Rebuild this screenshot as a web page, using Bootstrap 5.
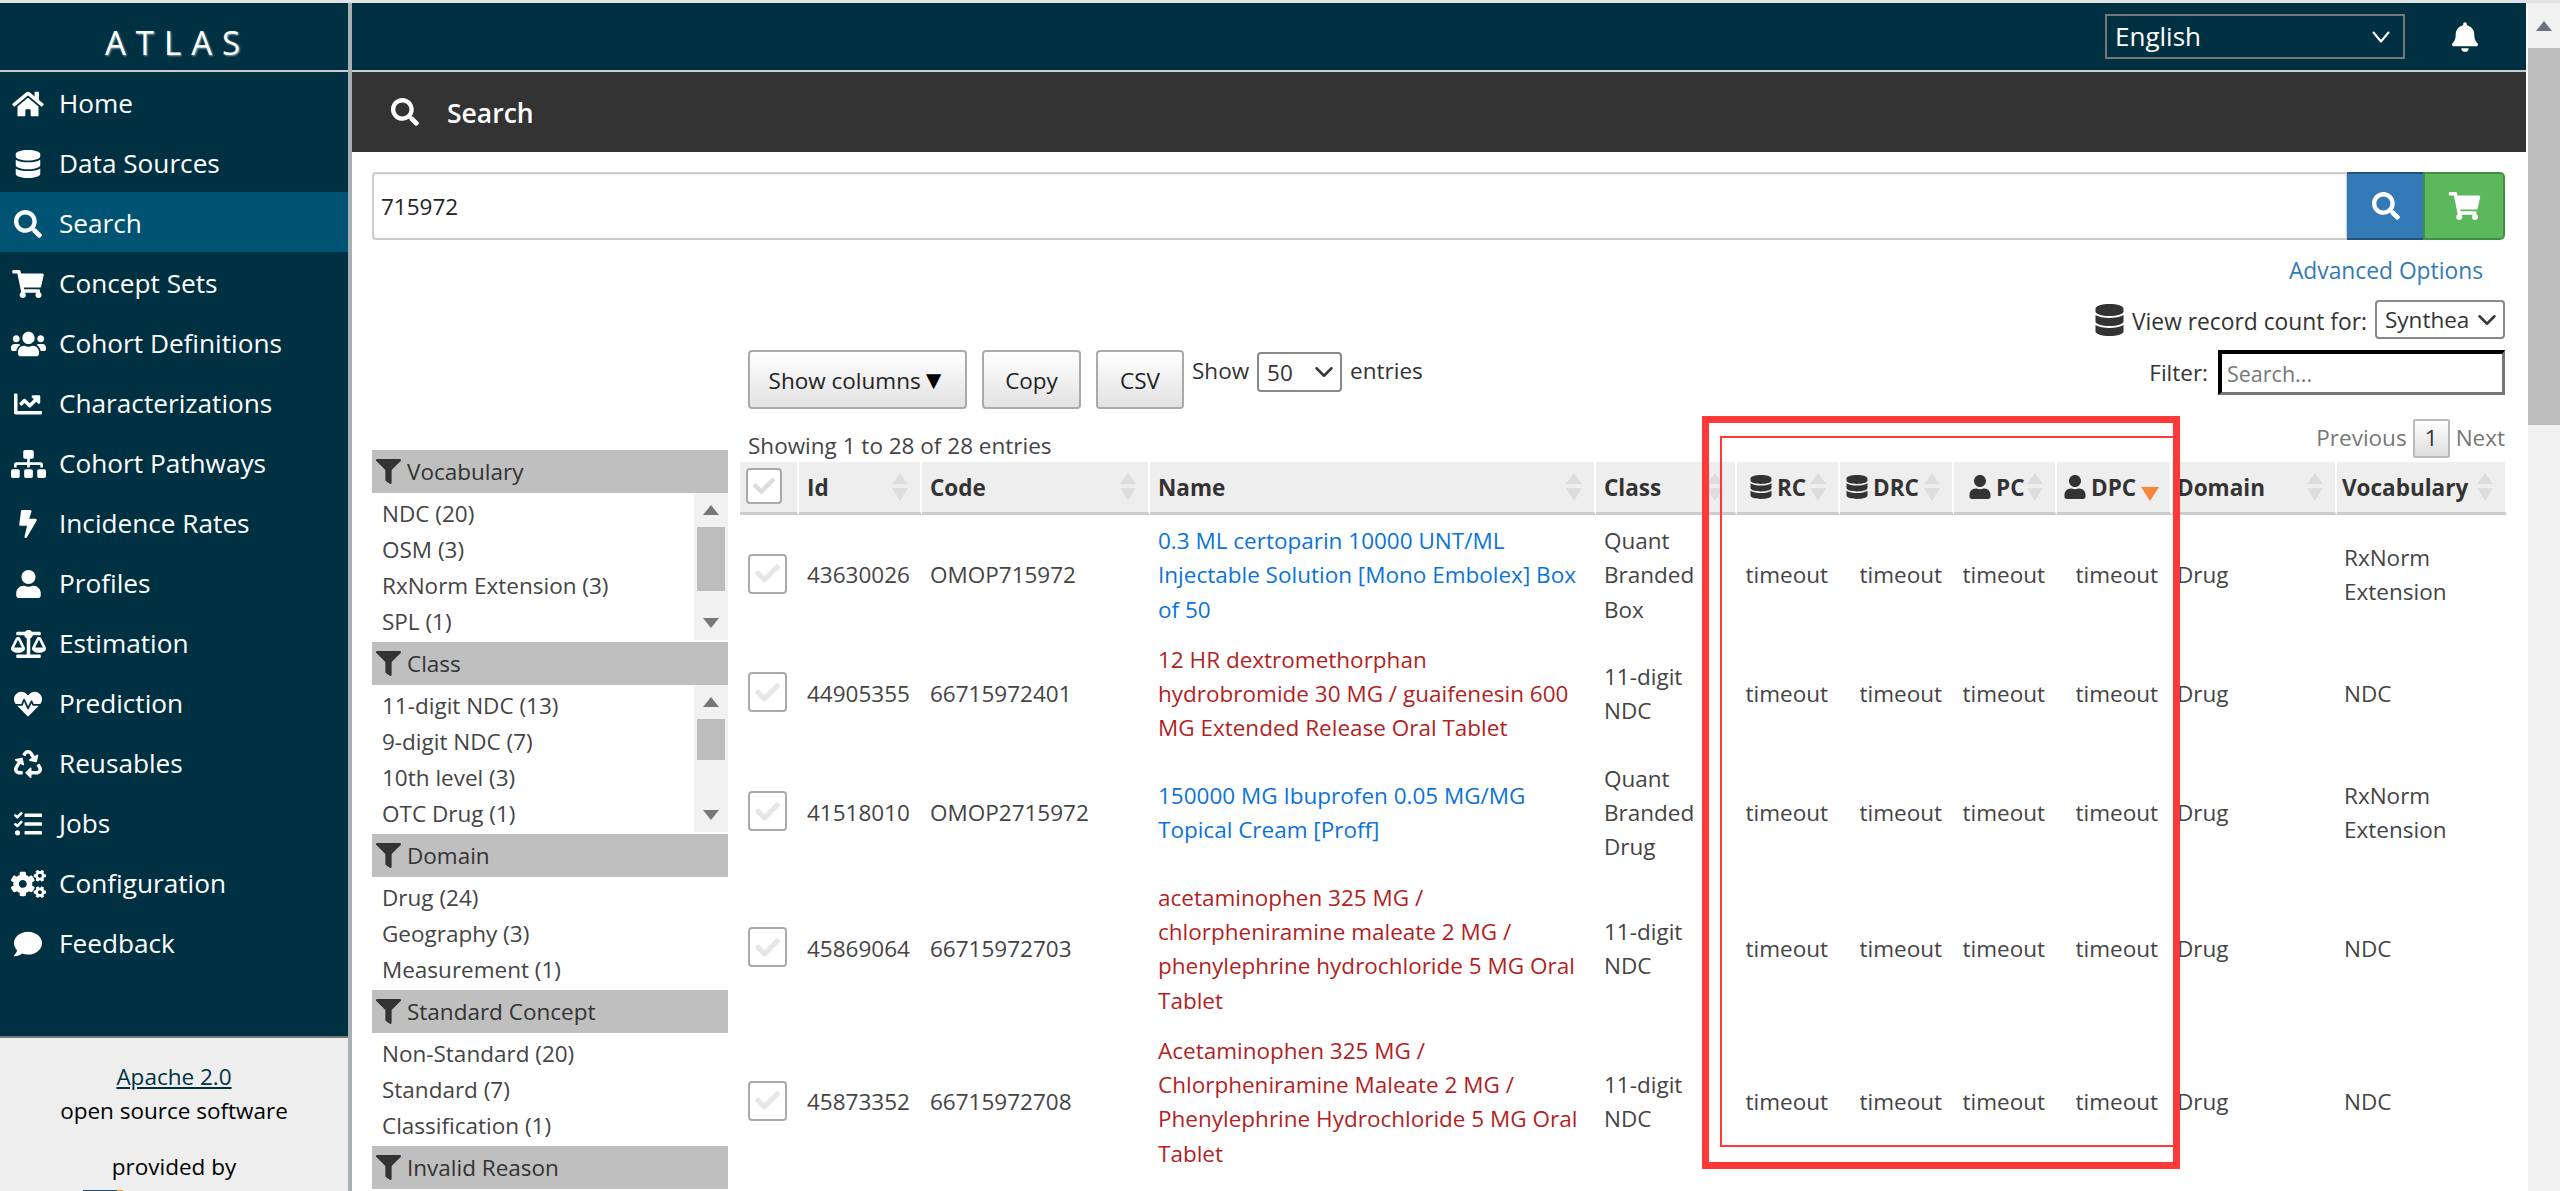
<!doctype html>
<html lang="en"><head><meta charset="utf-8"><title>ATLAS</title>
<link href="https://cdn.jsdelivr.net/npm/bootstrap@5.3.0/dist/css/bootstrap.min.css" rel="stylesheet">
<style>
html,body{height:100%;overflow:hidden;background:#fff}
body{font-family:"Open Sans","Noto Sans",sans-serif;font-size:22.5px;line-height:34.3px;color:#333}
.ic{fill:currentColor;display:inline-block;flex:none}
.shell{height:1191px;padding-top:3px;background:#dfe3e6;position:relative;overflow:hidden}
.shell-in{height:1188px;background:#fff}
.sidebar{width:352px;flex:none;background:#003142;border-right:4px solid #a9b0b3;height:100%}
.brand{height:69px;flex:none;border-bottom:2px solid #ccc;color:#fff;font-size:33px;letter-spacing:10px;padding:13px 0 0 7px;text-shadow:1px 1px 2px #8aa}
.menu a{height:60px;flex:none;color:#fff;text-decoration:none;font-size:26.2px;padding:3px 0 0 12px}
.menu a.on{background:#005373}
.menu .icw{width:32px;margin-right:15px;text-align:center;display:flex;justify-content:center}
.side-foot{background:#eee;border-top:2px solid #777;color:#000;height:155px;padding-top:22px;overflow:hidden;flex:none}
.side-foot a{color:#003142}
.side-foot p{margin:0;line-height:34.3px}
.side-foot .prov{margin-top:21px}
.logo-peek{width:40px;height:3px;background:linear-gradient(90deg,#2b4a63 85%,#f39a3c 85%);margin:6px auto 0 83px}
.menu{min-height:0;overflow:hidden}
.mainc{width:2174px;flex:none;height:100%}
.topb{height:67px;background:#003142;padding-right:48px;box-sizing:content-box}
.hr-l{height:2px;background:#ccc}
.lang{width:300px;height:45px;border:2px solid #777;border-radius:0;background-color:transparent;color:#fff;font-size:26px;padding:0 8px;line-height:41px;margin-right:47px;background-position:right 10px center;background-size:24px 24px;
background-image:url("data:image/svg+xml,%3csvg xmlns='http://www.w3.org/2000/svg' viewBox='0 0 16 16'%3e%3cpath fill='none' stroke='%23fff' stroke-linecap='round' stroke-linejoin='round' stroke-width='1.4' d='m3 5 5 6 5-6'/%3e%3c/svg%3e")}
.titleb{height:80px;background:#333;color:#fff;font-size:26.5px;font-weight:600;padding-left:39px}
.titleb .ic{margin-right:28px}
.titleb span{padding-top:2px}
.srch{margin:20px 21px 0 20px;width:auto}
.srch .form-control{height:68px;border:2px solid #ccc;border-radius:4px 0 0 4px;font-size:22.5px;color:#222;padding:0 6px 0 7px;box-shadow:inset 0 1px 2px rgba(0,0,0,.08)}
.bt-blue,.bt-green{height:68px;display:flex;align-items:center;justify-content:center;border-radius:0;color:#fff;padding:0}
.bt-blue{width:77px;background:#337ab7;border:2px solid #23527c;border-width:2px 0 2px 0}
.bt-green{width:82px;background:#5cb85c;border:2px solid #3d9140;border-radius:0 5px 5px 0}
.bt-blue:hover{background:#337ab7}.bt-green:hover{background:#5cb85c}
.advr{margin:14px 43px 0 0;text-align:right;font-size:22.8px;height:35px}
.advr a{color:#337ab7;text-decoration:none}
.recr{margin:11px 21px 0 0;height:39px}
.recr span{font-size:22.8px;padding-top:5px}
.sel-sm{height:39px;border:2px solid #888;border-radius:4px;font-size:22.5px;line-height:35px;color:#333;padding:0 0 0 8px;background-position:right 6px center;background-size:20px 20px}
.sel-src{width:130px;margin-left:8px}
.sel-cnt{width:85px;margin:0 8px;height:40px}
.wrk{margin:11px 19px 0 20px;gap:12px}
.facets{width:356px;flex:none;padding-top:100px}
.fhead{height:43px;background:#bfbfbf;color:#333;padding:0 0 0 4px;gap:6px}
.fhead span{padding-top:2px}
.flist{margin-bottom:2px}
.flist ul{list-style:none;margin:0;padding:3px 0 0 10px;flex:1 1 auto}
.flist li{height:36px;line-height:36px;color:#444;white-space:nowrap}
.fscroll{width:34px;flex:none;background:#f1f1f1;height:147px}
.farw{height:34px;display:flex;align-items:center;justify-content:center;color:#777;font-size:0}
.ftrack{height:79px;padding:0 3px}
.fthumb{background:#bdbdbd;width:100%}
.th1{height:64px}.th2{height:41px}
.tblw{width:1767px;flex:none}
.toolb{height:65px}
.bt-g{height:59px;border:2px solid #aaa;border-radius:4px;background:linear-gradient(#fff,#e2e2e2);color:#222;font-size:22.5px;padding:2px 0 0;margin:0 15px 0 0}
.bt-g1{width:219px;margin-left:8px;white-space:nowrap}.bt-g2{width:99px}.bt-g3{width:88px;margin-right:8px}
.bt-g1 span{font-size:26px;line-height:1}
.mid-t{margin-top:-2px}
.mid-t span{padding-top:2px}
.filt{margin-right:2px}
.filt>span{padding-top:2px}
.filt input{width:287px;height:45px;margin-left:10px;border-style:inset;border-width:4px 3px 3px 4px;border-color:#222 #777 #777 #222;border-radius:0;padding:0 5px;font-size:21.5px;outline:0}
.filt input::placeholder{color:#777}
.infob{height:47px;padding-left:8px;padding-right:2px}
.infob .shw{align-self:flex-end;color:#444;margin-bottom:-1px}
.pgr{color:#777;gap:6px}
.pgn{width:37px;height:39px;border:2px solid #bbb;border-radius:2px;background:linear-gradient(#fff,#ddd);display:flex;align-items:center;justify-content:center;color:#333}
.dtbl{table-layout:fixed;width:1767px;border-collapse:separate;border-spacing:0;color:#333;margin:0;font-size:22.5px;line-height:34.3px}
.dtbl th{background:#eee;height:53px;padding:3px 0 0 8px;border-right:2px solid #fff;border-bottom:3px solid #ccc;font-weight:700;color:#333;white-space:nowrap;position:relative;vertical-align:middle}
.dtbl td{padding:9px 2px 7px 8px;vertical-align:middle;white-space:nowrap;color:#444;background:transparent;border:0}
.dtbl td.num{text-align:right;padding:9px 12px 7px 0}
.dtbl td.num.last{padding-right:14px}
.dtbl th.pl5,.dtbl td.pl5{padding-left:5px}
.dtbl th.pl7,.dtbl td.pl7{padding-left:7px}
.c-blue{color:#0b73d9!important}.c-red{color:#b21f24!important}
.srt::before,.srt::after{content:"";position:absolute;right:12px;border-left:8px solid transparent;border-right:8px solid transparent}
.srt::before{top:11px;border-bottom:11px solid #ddd}
.srt::after{top:26px;border-top:13px solid #ddd}
.srt.dn::before{display:none}
.srt.dn::after{border-top-color:#f8853a;top:25px;right:11px;border-left-width:9px;border-right-width:9px;border-top-width:14px}
.dtbl th.n{padding:0 0 0 6px}
.ick{display:inline-flex;align-items:center;justify-content:center;border:2px solid #aaa;border-radius:4px;background:#fff;color:#e6e6e6}
.ick-h{width:36px;height:36px;color:#ddd}
.ick-r{width:39px;height:40px;position:relative;top:-1px}
.hd1{padding-left:13px!important}.hd2{padding-left:6px!important}.hd3{padding-left:15px!important}.hd4{padding-left:7px!important}
.hd1 .ic,.hd2 .ic,.hd3 .ic,.hd4 .ic{vertical-align:-3px;margin-right:5px;color:#333}
.scrl{width:32px;flex:none;margin-left:2px;background:#f1f1f1;height:100%}
.scrl .up{height:45px;display:flex;align-items:center;justify-content:center}
.scrl .thm{height:377px;background:#bdbdbd}
.redo{position:absolute;left:1702px;top:416px;width:478px;height:753px;border:7px solid #ff3838;pointer-events:none}
.redi{position:absolute;left:1720px;top:436px;width:453px;height:711px;border:2px solid #ff3838;border-right:0;pointer-events:none}
</style></head>
<body>
<svg width="0" height="0" class="position-absolute"><defs>
<symbol id="i-home" viewBox="0 0 576 512"><path d="M280.37 148.26L96 300.11V464a16 16 0 0 0 16 16l112.06-.29a16 16 0 0 0 15.92-16V368a16 16 0 0 1 16-16h64a16 16 0 0 1 16 16v95.64a16 16 0 0 0 16 16.05L464 480a16 16 0 0 0 16-16V300L295.67 148.26a12.19 12.19 0 0 0-15.3 0zM571.6 251.47L488 182.56V44.05a12 12 0 0 0-12-12h-56a12 12 0 0 0-12 12v72.61L318.47 43a48 48 0 0 0-61 0L4.34 251.47a12 12 0 0 0-1.6 16.9l25.5 31A12 12 0 0 0 45.15 301l235.22-193.74a12.19 12.19 0 0 1 15.3 0L530.9 301a12 12 0 0 0 16.9-1.6l25.5-31a12 12 0 0 0-1.7-16.93z"/></symbol>
<symbol id="i-db" viewBox="0 0 448 512"><path d="M448 73.143v45.714C448 159.143 347.667 192 224 192S0 159.143 0 118.857V73.143C0 32.857 100.333 0 224 0s224 32.857 224 73.143zM448 176v102.857C448 319.143 347.667 352 224 352S0 319.143 0 278.857V176c48.125 33.143 136.208 48.572 224 48.572S399.874 209.143 448 176zm0 160v102.857C448 479.143 347.667 512 224 512S0 479.143 0 438.857V336c48.125 33.143 136.208 48.572 224 48.572S399.874 369.143 448 336z"/></symbol>
<symbol id="i-search" viewBox="0 0 512 512"><path d="M505 442.7L405.3 343c-4.5-4.5-10.6-7-17-7H372c27.6-35.3 44-79.7 44-128C416 93.1 322.9 0 208 0S0 93.1 0 208s93.1 208 208 208c48.3 0 92.7-16.4 128-44v16.3c0 6.4 2.5 12.5 7 17l99.7 99.7c9.4 9.4 24.6 9.4 33.9 0l28.3-28.3c9.4-9.4 9.4-24.6.1-34zM208 336c-70.7 0-128-57.2-128-128 0-70.7 57.2-128 128-128 70.7 0 128 57.2 128 128 0 70.7-57.2 128-128 128z"/></symbol>
<symbol id="i-cart" viewBox="0 0 576 512"><path d="M528.12 301.319l47.273-208C578.806 78.301 567.391 64 551.99 64H159.208l-9.166-44.81C147.758 8.021 137.93 0 126.529 0H24C10.745 0 0 10.745 0 24v16c0 13.255 10.745 24 24 24h69.883l70.248 343.435C147.325 417.1 136 435.222 136 456c0 30.928 25.072 56 56 56s56-25.072 56-56c0-15.674-6.447-29.835-16.824-40h209.647C430.447 426.165 424 440.326 424 456c0 30.928 25.072 56 56 56s56-25.072 56-56c0-22.172-12.888-41.332-31.579-50.405l5.517-24.276c3.413-15.018-8.002-29.319-23.403-29.319H218.117l-6.545-32h293.145c11.206 0 20.92-7.754 23.403-18.681z"/></symbol>
<symbol id="i-users" viewBox="0 0 640 512"><path d="M96 224c35.3 0 64-28.7 64-64s-28.7-64-64-64-64 28.7-64 64 28.7 64 64 64zm448 0c35.3 0 64-28.7 64-64s-28.7-64-64-64-64 28.7-64 64 28.7 64 64 64zm32 32h-64c-17.6 0-33.5 7.1-45.1 18.6 40.3 22.1 68.9 62 75.1 109.4h66c17.7 0 32-14.3 32-32v-32c0-35.3-28.7-64-64-64zm-256 0c61.9 0 112-50.1 112-112S381.9 32 320 32 208 82.1 208 144s50.1 112 112 112zm76.8 32h-8.3c-20.8 10-43.9 16-68.5 16s-47.6-6-68.5-16h-8.3C179.6 288 128 339.6 128 403.2V432c0 26.5 21.5 48 48 48h288c26.5 0 48-21.5 48-48v-28.8c0-63.6-51.6-115.2-115.2-115.2zm-223.7-13.4C161.5 263.1 145.6 256 128 256H64c-35.3 0-64 28.7-64 64v32c0 17.7 14.3 32 32 32h65.9c6.3-47.4 34.9-87.3 75.2-109.4z"/></symbol>
<symbol id="i-chart" viewBox="0 0 512 512"><path d="M496 384H64V80c0-8.84-7.16-16-16-16H16C7.16 64 0 71.16 0 80v336c0 17.67 14.33 32 32 32h464c8.84 0 16-7.16 16-16v-32c0-8.84-7.16-16-16-16zM464 96H345.94c-21.38 0-32.09 25.85-16.97 40.97l32.4 32.4L288 242.75l-73.37-73.37c-12.5-12.5-32.76-12.5-45.25 0l-68.69 68.69c-6.25 6.25-6.25 16.38 0 22.63l22.62 22.62c6.25 6.25 16.38 6.25 22.63 0L192 237.25l73.37 73.37c12.5 12.5 32.76 12.5 45.25 0l96-96 32.4 32.4c15.12 15.12 40.97 4.41 40.97-16.97V112c.01-8.84-7.15-16-15.99-16z"/></symbol>
<symbol id="i-site" viewBox="0 0 640 512"><path d="M128 352H32c-17.67 0-32 14.33-32 32v96c0 17.67 14.33 32 32 32h96c17.67 0 32-14.33 32-32v-96c0-17.67-14.33-32-32-32zm-24-80h192v48h48v-48h192v48h48v-57.59c0-21.17-17.23-38.41-38.41-38.41H344v-64h40c17.67 0 32-14.33 32-32V32c0-17.67-14.33-32-32-32H256c-17.67 0-32 14.33-32 32v96c0 17.67 14.33 32 32 32h40v64H94.41C73.23 224 56 241.23 56 262.41V320h48v-48zm264 80h-96c-17.67 0-32 14.33-32 32v96c0 17.67 14.33 32 32 32h96c17.67 0 32-14.33 32-32v-96c0-17.67-14.33-32-32-32zm240 0h-96c-17.67 0-32 14.33-32 32v96c0 17.67 14.33 32 32 32h96c17.67 0 32-14.33 32-32v-96c0-17.67-14.33-32-32-32z"/></symbol>
<symbol id="i-bolt" viewBox="0 0 320 512"><path d="M296 160H180.6l42.6-129.8C227.2 15 215.7 0 200 0H56C44 0 33.8 8.9 32.2 20.8l-32 240C-1.7 275.2 9.5 288 24 288h118.7L96.6 482.5c-3.6 15.2 8 29.5 23.3 29.5 8.4 0 16.4-4.4 20.8-12l176-304c9.3-15.9-2.2-36-20.7-36z"/></symbol>
<symbol id="i-user" viewBox="0 0 448 512"><path d="M224 256c70.7 0 128-57.3 128-128S294.7 0 224 0 96 57.3 96 128s57.3 128 128 128zm89.6 32h-16.7c-22.2 10.2-46.9 16-72.9 16s-50.6-5.8-72.9-16h-16.7C60.2 288 0 348.2 0 422.4V464c0 26.5 21.5 48 48 48h352c26.5 0 48-21.5 48-48v-41.6c0-74.2-60.2-134.4-134.4-134.4z"/></symbol>
<symbol id="i-scale" viewBox="0 0 640 512"><path d="M256 336h-.02c0-16.18 1.34-8.73-85.05-181.51-17.65-35.29-68.19-35.36-85.87 0C-2.06 328.75.02 320.33.02 336H0c0 44.18 57.31 80 128 80s128-35.82 128-80zM128 176l72 144H56l72-144zm511.98 160c0-16.18 1.34-8.73-85.05-181.51-17.65-35.29-68.19-35.36-85.87 0-87.12 174.26-85.04 165.84-85.04 181.51H384c0 44.18 57.31 80 128 80s128-35.82 128-80h-.02zM440 320l72-144 72 144H440zm88 128H352V153.25c23.51-10.29 41.16-31.48 46.39-57.25H528c8.84 0 16-7.16 16-16V48c0-8.84-7.16-16-16-16H383.64C369.04 12.68 346.09 0 320 0s-49.04 12.68-63.64 32H112c-8.84 0-16 7.16-16 16v32c0 8.84 7.16 16 16 16h129.61c5.23 25.76 22.87 46.96 46.39 57.25V448H112c-8.84 0-16 7.16-16 16v32c0 8.84 7.16 16 16 16h416c8.84 0 16-7.16 16-16v-32c0-8.84-7.16-16-16-16z"/></symbol>
<symbol id="i-heart" viewBox="0 0 512 512"><path d="M320.2 243.8l-49.7 99.4c-6 12.1-23.4 11.7-28.9-.6l-56.9-126.3-30 71.7H60.6l182.5 186.5c7.1 7.3 18.6 7.3 25.7 0L451.4 288H342.3l-22.1-44.2zM473.7 73.9l-2.4-2.5c-51.5-52.6-135.8-52.6-187.4 0L256 100l-27.9-28.5c-51.5-52.7-135.9-52.7-187.4 0l-2.4 2.4C-10.4 123.7-12.5 203 31 256h102.4l35.9-86.2c5.4-12.9 23.6-13.2 29.4-.4l58.2 129.3 49-97.9c5.9-11.8 22.7-11.8 28.6 0l27.6 55.2H481c43.5-53 41.4-132.3-7.3-182.1z"/></symbol>
<symbol id="i-recycle" viewBox="0 0 512 512"><path d="M184.561 261.903c3.232 13.997-12.123 24.635-24.068 17.168l-40.736-25.455-50.867 81.402C55.606 356.273 70.96 384 96.012 384H148c6.627 0 12 5.373 12 12v40c0 6.627-5.373 12-12 12H96.115c-75.334 0-121.302-83.048-81.408-146.88l50.822-81.388-40.725-25.448c-12.081-7.547-8.966-25.961 4.879-29.158l110.237-25.45c8.611-1.988 17.201 3.381 19.189 11.99l25.452 110.237zm98.561-182.915l41.289 66.076-40.74 25.457c-12.051 7.528-9 25.953 4.879 29.158l110.237 25.45c8.672 1.999 17.215-3.438 19.189-11.99l25.45-110.237c3.197-13.844-11.99-24.719-24.068-17.168l-40.687 25.424-41.263-66.082c-37.521-60.033-125.209-60.171-162.816 0l-17.963 28.766c-3.51 5.62-1.8 13.021 3.82 16.533l33.919 21.195c5.62 3.512 13.024 1.803 16.536-3.817l17.961-28.743c12.712-20.341 42.272-20.459 55.057-.022zM497.288 301.12l-27.541-44.101c-3.511-5.618-10.915-7.33-16.535-3.818l-33.861 21.159c-5.62 3.512-7.33 10.915-3.818 16.536l27.564 44.101c13.257 21.219-2.048 48.79-27.1 48.79H320V336.02c0-14.201-17.283-21.487-27.318-11.313l-80 80c-6.249 6.248-6.249 16.379 0 22.627l80 80C302.696 517.347 320 510.333 320 496v-48h95.88c75.274 0 121.335-82.997 81.408-146.88z"/></symbol>
<symbol id="i-tasks" viewBox="0 0 512 512"><path d="M139.61 35.5a12 12 0 0 0-17 0L58.93 98.81l-22.7-22.12a12 12 0 0 0-17 0L3.53 92.41a12 12 0 0 0 0 17l47.59 47.4a12.78 12.78 0 0 0 17.61 0l15.59-15.62L156.52 69a12.09 12.09 0 0 0 .09-17zm0 159.19a12 12 0 0 0-17 0l-63.68 63.72-22.7-22.1a12 12 0 0 0-17 0L3.53 252a12 12 0 0 0 0 17L51 316.5a12.77 12.77 0 0 0 17.6 0l15.7-15.69 72.2-72.22a12 12 0 0 0 .09-16.9zM64 368c-26.49 0-48.59 21.5-48.59 48S37.53 464 64 464a48 48 0 0 0 0-96zm432 16H208a16 16 0 0 0-16 16v32a16 16 0 0 0 16 16h288a16 16 0 0 0 16-16v-32a16 16 0 0 0-16-16zm0-320H208a16 16 0 0 0-16 16v32a16 16 0 0 0 16 16h288a16 16 0 0 0 16-16V80a16 16 0 0 0-16-16zm0 160H208a16 16 0 0 0-16 16v32a16 16 0 0 0 16 16h288a16 16 0 0 0 16-16v-32a16 16 0 0 0-16-16z"/></symbol>
<symbol id="i-cogs" viewBox="0 0 640 512"><path d="M512.1 191l-8.2 14.3c-3 5.3-9.4 7.5-15.1 5.4-11.8-4.4-22.6-10.7-32.1-18.6-4.6-3.8-5.8-10.5-2.8-15.7l8.2-14.3c-6.9-8-12.3-17.3-15.9-27.4h-16.5c-6 0-11.2-4.3-12.2-10.3-2-12-2.1-24.6 0-37.1 1-6 6.2-10.4 12.2-10.4h16.5c3.6-10.1 9-19.4 15.9-27.4l-8.2-14.3c-3-5.2-1.9-11.9 2.8-15.7 9.5-7.9 20.4-14.2 32.1-18.6 5.7-2.1 12.1.1 15.1 5.4l8.2 14.3c10.5-1.9 21.2-1.9 31.7 0L552 6.3c3-5.3 9.4-7.5 15.1-5.4 11.8 4.4 22.6 10.7 32.1 18.6 4.6 3.8 5.8 10.5 2.8 15.7l-8.2 14.3c6.9 8 12.3 17.3 15.9 27.4h16.5c6 0 11.2 4.3 12.2 10.3 2 12 2.1 24.6 0 37.1-1 6-6.2 10.4-12.2 10.4h-16.5c-3.6 10.1-9 19.4-15.9 27.4l8.2 14.3c3 5.2 1.9 11.9-2.8 15.7-9.5 7.9-20.4 14.2-32.1 18.6-5.7 2.1-12.1-.1-15.1-5.4l-8.2-14.3c-10.4 1.9-21.2 1.9-31.7 0zm-10.5-58.8c38.5 29.6 82.4-14.3 52.8-52.8-38.5-29.7-82.4 14.3-52.8 52.8zM386.3 286.1l33.7 16.8c10.1 5.8 14.5 18.1 10.5 29.1-8.9 24.2-26.4 46.4-42.6 65.8-7.4 8.9-20.2 11.1-30.3 5.3l-29.1-16.8c-16 13.7-34.6 24.6-54.9 31.7v33.6c0 11.6-8.3 21.6-19.7 23.6-24.6 4.2-50.4 4.4-75.9 0-11.5-2-20-11.9-20-23.6V418c-20.3-7.2-38.9-18-54.9-31.7L74 403c-10 5.8-22.9 3.6-30.3-5.3-16.2-19.4-33.3-41.6-42.2-65.7-4-10.9.4-23.2 10.5-29.1l33.3-16.8c-3.9-20.9-3.9-42.4 0-63.4L12 205.8c-10.1-5.8-14.6-18.1-10.5-29 8.9-24.2 26-46.4 42.2-65.8 7.4-8.9 20.2-11.1 30.3-5.3l29.1 16.8c16-13.7 34.6-24.6 54.9-31.7V57.1c0-11.5 8.2-21.5 19.6-23.5 24.6-4.2 50.5-4.4 76-.1 11.5 2 20 11.9 20 23.6v33.6c20.3 7.2 38.9 18 54.9 31.7l29.1-16.8c10-5.8 22.9-3.6 30.3 5.3 16.2 19.4 33.2 41.6 42.1 65.8 4 10.9.1 23.2-10 29.1l-33.7 16.8c3.9 21 3.9 42.5 0 63.5zm-117.6 21.1c59.2-77-28.7-164.9-105.7-105.7-59.2 77 28.7 164.9 105.7 105.7zm243.4 182.7l-8.2 14.3c-3 5.3-9.4 7.5-15.1 5.4-11.8-4.4-22.6-10.7-32.1-18.6-4.6-3.8-5.8-10.5-2.8-15.7l8.2-14.3c-6.9-8-12.3-17.3-15.9-27.4h-16.5c-6 0-11.2-4.3-12.2-10.3-2-12-2.1-24.6 0-37.1 1-6 6.2-10.4 12.2-10.4h16.5c3.6-10.1 9-19.4 15.9-27.4l-8.2-14.3c-3-5.2-1.9-11.9 2.8-15.7 9.5-7.9 20.4-14.2 32.1-18.6 5.7-2.1 12.1.1 15.1 5.4l8.2 14.3c10.5-1.9 21.2-1.9 31.7 0l8.2-14.3c3-5.3 9.4-7.5 15.1-5.4 11.8 4.4 22.6 10.7 32.1 18.6 4.6 3.8 5.8 10.5 2.8 15.7l-8.2 14.3c6.9 8 12.3 17.3 15.9 27.4h16.5c6 0 11.2 4.3 12.2 10.3 2 12 2.1 24.6 0 37.1-1 6-6.2 10.4-12.2 10.4h-16.5c-3.6 10.1-9 19.4-15.9 27.4l8.2 14.3c3 5.2 1.9 11.9-2.8 15.7-9.5 7.9-20.4 14.2-32.1 18.6-5.7 2.1-12.1-.1-15.1-5.4l-8.2-14.3c-10.4 1.9-21.2 1.9-31.7 0zM501.6 431c38.5 29.6 82.4-14.3 52.8-52.8-38.5-29.6-82.4 14.3-52.8 52.8z"/></symbol>
<symbol id="i-comment" viewBox="0 0 512 512"><path d="M256 32C114.6 32 0 125.1 0 240c0 49.6 21.4 95 57 130.7C44.5 421.1 2.7 466 2.2 466.5c-2.2 2.3-2.8 5.7-1.5 8.7S4.8 480 8 480c66.3 0 116-31.8 140.6-51.4 32.7 12.3 69 19.4 107.4 19.4 141.4 0 256-93.1 256-208S397.4 32 256 32z"/></symbol>
<symbol id="i-bell" viewBox="0 0 448 512"><path d="M224 512c35.32 0 63.97-28.65 63.97-64H160.03c0 35.35 28.65 64 63.97 64zm215.39-149.71c-19.32-20.76-55.47-51.99-55.47-154.29 0-77.7-54.48-139.9-127.94-155.16V32c0-17.67-14.32-32-31.98-32s-31.98 14.33-31.98 32v20.84C118.56 68.1 64.08 130.3 64.08 208c0 102.3-36.15 133.53-55.47 154.29-6 6.45-8.66 14.16-8.61 21.71.11 16.4 12.98 32 32.1 32h383.8c19.12 0 32-15.6 32.1-32 .05-7.55-2.61-15.27-8.61-21.71z"/></symbol>
<symbol id="i-filter" viewBox="0 0 512 512"><path d="M487.976 0H24.028C2.71 0-8.047 25.866 7.058 40.971L192 225.941V432c0 7.831 3.821 15.17 10.237 19.662l80 55.98C298.02 518.69 320 507.493 320 487.98V225.941l184.947-184.97C520.021 25.896 509.338 0 487.976 0z"/></symbol>
<symbol id="i-check" viewBox="0 0 512 512"><path d="M173.898 439.404l-166.4-166.4c-9.997-9.997-9.997-26.206 0-36.204l36.203-36.204c9.997-9.998 26.207-9.998 36.204 0L192 312.69 432.095 72.596c9.997-9.997 26.207-9.997 36.204 0l36.203 36.204c9.997 9.997 9.997 26.206 0 36.204l-294.4 294.401c-9.998 9.997-26.207 9.997-36.204-.001z"/></symbol>
<symbol id="a-up" viewBox="0 0 16 10"><path d="M8 0l8 10H0z"/></symbol>
<symbol id="a-dn" viewBox="0 0 16 10"><path d="M0 0h16L8 10z"/></symbol>
</defs></svg>

<div class="shell">
<div class="shell-in d-flex">
  <aside class="sidebar d-flex flex-column">
    <div class="brand d-flex align-items-center justify-content-center">ATLAS</div>
    <nav class="menu flex-grow-1 d-flex flex-column">
      <a href="#" class="d-flex align-items-center"><span class="icw"><svg class="ic" width="32" height="28"><use href="#i-home"/></svg></span>Home</a>
      <a href="#" class="d-flex align-items-center"><span class="icw"><svg class="ic" width="26" height="28"><use href="#i-db"/></svg></span>Data Sources</a>
      <a href="#" class="d-flex align-items-center on"><span class="icw"><svg class="ic" width="28" height="28"><use href="#i-search"/></svg></span>Search</a>
      <a href="#" class="d-flex align-items-center"><span class="icw"><svg class="ic" width="32" height="28"><use href="#i-cart"/></svg></span>Concept Sets</a>
      <a href="#" class="d-flex align-items-center"><span class="icw"><svg class="ic" width="35" height="28"><use href="#i-users"/></svg></span>Cohort Definitions</a>
      <a href="#" class="d-flex align-items-center"><span class="icw"><svg class="ic" width="28" height="28"><use href="#i-chart"/></svg></span>Characterizations</a>
      <a href="#" class="d-flex align-items-center"><span class="icw"><svg class="ic" width="35" height="28"><use href="#i-site"/></svg></span>Cohort Pathways</a>
      <a href="#" class="d-flex align-items-center"><span class="icw"><svg class="ic" width="18" height="28"><use href="#i-bolt"/></svg></span>Incidence Rates</a>
      <a href="#" class="d-flex align-items-center"><span class="icw"><svg class="ic" width="25" height="28"><use href="#i-user"/></svg></span>Profiles</a>
      <a href="#" class="d-flex align-items-center"><span class="icw"><svg class="ic" width="35" height="28"><use href="#i-scale"/></svg></span>Estimation</a>
      <a href="#" class="d-flex align-items-center"><span class="icw"><svg class="ic" width="28" height="28"><use href="#i-heart"/></svg></span>Prediction</a>
      <a href="#" class="d-flex align-items-center"><span class="icw"><svg class="ic" width="28" height="28"><use href="#i-recycle"/></svg></span>Reusables</a>
      <a href="#" class="d-flex align-items-center"><span class="icw"><svg class="ic" width="28" height="28"><use href="#i-tasks"/></svg></span>Jobs</a>
      <a href="#" class="d-flex align-items-center"><span class="icw"><svg class="ic" width="35" height="28"><use href="#i-cogs"/></svg></span>Configuration</a>
      <a href="#" class="d-flex align-items-center"><span class="icw"><svg class="ic" width="28" height="28"><use href="#i-comment"/></svg></span>Feedback</a>
    </nav>
    <footer class="side-foot text-center">
      <p><a href="#">Apache 2.0</a></p>
      <p>open source software</p>
      <p class="prov">provided by</p>
      <div class="logo-peek"></div>
    </footer>
  </aside>
  <main class="mainc d-flex flex-column">
    <div class="topb d-flex align-items-center justify-content-end">
      <select class="form-select lang" aria-label="Language"><option>English</option></select>
      <svg class="ic text-white" width="26" height="30"><use href="#i-bell"/></svg>
    </div>
    <div class="hr-l"></div>
    <div class="titleb d-flex align-items-center"><svg class="ic" width="28" height="28"><use href="#i-search"/></svg><span>Search</span></div>
    <div class="srch input-group">
      <input class="form-control" value="715972">
      <button class="btn bt-blue"><svg class="ic" width="28" height="28"><use href="#i-search"/></svg></button>
      <button class="btn bt-green"><svg class="ic" width="33" height="28"><use href="#i-cart"/></svg></button>
    </div>
    <div class="advr"><a href="#">Advanced Options</a></div>
    <div class="recr d-flex justify-content-end align-items-center">
      <svg class="ic me-2" width="29" height="32"><use href="#i-db"/></svg><span>View record count for:</span>
      <select class="form-select sel-sm sel-src"><option>Synthea</option></select>
    </div>
    <div class="wrk d-flex flex-grow-1">
      <section class="facets">
        <div class="fhead d-flex align-items-center"><svg class="ic" width="25" height="25"><use href="#i-filter"/></svg><span>Vocabulary</span></div>
        <div class="flist d-flex"><ul><li>NDC (20)</li><li>OSM (3)</li><li>RxNorm Extension (3)</li><li>SPL (1)</li></ul>
          <div class="fscroll"><div class="farw"><svg class="ic" width="16" height="10"><use href="#a-up"/></svg></div><div class="ftrack"><div class="fthumb th1"></div></div><div class="farw"><svg class="ic" width="16" height="10"><use href="#a-dn"/></svg></div></div></div>
        <div class="fhead d-flex align-items-center"><svg class="ic" width="25" height="25"><use href="#i-filter"/></svg><span>Class</span></div>
        <div class="flist d-flex"><ul><li>11-digit NDC (13)</li><li>9-digit NDC (7)</li><li>10th level (3)</li><li>OTC Drug (1)</li></ul>
          <div class="fscroll"><div class="farw"><svg class="ic" width="16" height="10"><use href="#a-up"/></svg></div><div class="ftrack"><div class="fthumb th2"></div></div><div class="farw"><svg class="ic" width="16" height="10"><use href="#a-dn"/></svg></div></div></div>
        <div class="fhead d-flex align-items-center"><svg class="ic" width="25" height="25"><use href="#i-filter"/></svg><span>Domain</span></div>
        <div class="flist d-flex"><ul><li>Drug (24)</li><li>Geography (3)</li><li>Measurement (1)</li></ul></div>
        <div class="fhead d-flex align-items-center"><svg class="ic" width="25" height="25"><use href="#i-filter"/></svg><span>Standard Concept</span></div>
        <div class="flist d-flex"><ul><li>Non-Standard (20)</li><li>Standard (7)</li><li>Classification (1)</li></ul></div>
        <div class="fhead d-flex align-items-center"><svg class="ic" width="25" height="25"><use href="#i-filter"/></svg><span>Invalid Reason</span></div>
      </section>
      <section class="tblw">
        <div class="toolb d-flex justify-content-between align-items-start">
          <div class="d-flex align-items-start">
            <button class="btn bt-g bt-g1">Show columns<span class="text-black">▼</span></button>
            <button class="btn bt-g bt-g2">Copy</button>
            <button class="btn bt-g bt-g3">CSV</button>
            <div class="d-flex align-items-center mid-t"><span>Show</span><select class="form-select sel-sm sel-cnt mt-1"><option>50</option></select><span>entries</span></div>
          </div>
          <div class="filt d-flex align-items-center"><span>Filter:</span><input class="form-control" placeholder="Search..."></div>
        </div>
        <div class="infob d-flex justify-content-between align-items-center">
          <span class="shw">Showing 1 to 28 of 28 entries</span>
          <div class="pgr d-flex align-items-center"><span>Previous</span><span class="pgn">1</span><span>Next</span></div>
        </div>
        <table class="table table-borderless dtbl">
          <colgroup><col style="width:59px"><col style="width:123px"><col style="width:228px"><col style="width:446px"><col style="width:141px"><col style="width:103px"><col style="width:114px"><col style="width:103px"><col style="width:115px"><col style="width:165px"><col style="width:170px"></colgroup>
          <thead><tr>
            <th class="n"><span class="ick ick-h"><svg class="ic" width="22" height="22"><use href="#i-check"/></svg></span></th>
            <th class="srt">Id</th><th class="srt">Code</th><th class="srt">Name</th><th class="srt">Class</th>
            <th class="srt hd1"><svg class="ic" width="22" height="24"><use href="#i-db"/></svg>RC</th>
            <th class="srt hd2"><svg class="ic" width="22" height="24"><use href="#i-db"/></svg>DRC</th>
            <th class="srt hd3"><svg class="ic" width="22" height="24"><use href="#i-user"/></svg>PC</th>
            <th class="srt dn hd4"><svg class="ic" width="22" height="24"><use href="#i-user"/></svg>DPC</th>
            <th class="srt pl5">Domain</th><th class="srt pl5">Vocabulary</th>
          </tr></thead>
          <tbody>
            <tr><td><span class="ick ick-r"><svg class="ic" width="25" height="25"><use href="#i-check"/></svg></span></td><td>43630026</td><td>OMOP715972</td><td class="c-blue">0.3 ML certoparin 10000 UNT/ML<br>Injectable Solution [Mono Embolex] Box<br>of 50</td><td>Quant<br>Branded<br>Box</td><td class="num">timeout</td><td class="num">timeout</td><td class="num">timeout</td><td class="num last">timeout</td><td class="pl5">Drug</td><td class="pl7">RxNorm<br>Extension</td></tr>
            <tr><td><span class="ick ick-r"><svg class="ic" width="25" height="25"><use href="#i-check"/></svg></span></td><td>44905355</td><td>66715972401</td><td class="c-red">12 HR dextromethorphan<br>hydrobromide 30 MG / guaifenesin 600<br>MG Extended Release Oral Tablet</td><td>11-digit<br>NDC</td><td class="num">timeout</td><td class="num">timeout</td><td class="num">timeout</td><td class="num last">timeout</td><td class="pl5">Drug</td><td class="pl7">NDC</td></tr>
            <tr><td><span class="ick ick-r"><svg class="ic" width="25" height="25"><use href="#i-check"/></svg></span></td><td>41518010</td><td>OMOP2715972</td><td class="c-blue">150000 MG Ibuprofen 0.05 MG/MG<br>Topical Cream [Proff]</td><td>Quant<br>Branded<br>Drug</td><td class="num">timeout</td><td class="num">timeout</td><td class="num">timeout</td><td class="num last">timeout</td><td class="pl5">Drug</td><td class="pl7">RxNorm<br>Extension</td></tr>
            <tr><td><span class="ick ick-r"><svg class="ic" width="25" height="25"><use href="#i-check"/></svg></span></td><td>45869064</td><td>66715972703</td><td class="c-red">acetaminophen 325 MG /<br>chlorpheniramine maleate 2 MG /<br>phenylephrine hydrochloride 5 MG Oral<br>Tablet</td><td>11-digit<br>NDC</td><td class="num">timeout</td><td class="num">timeout</td><td class="num">timeout</td><td class="num last">timeout</td><td class="pl5">Drug</td><td class="pl7">NDC</td></tr>
            <tr><td><span class="ick ick-r"><svg class="ic" width="25" height="25"><use href="#i-check"/></svg></span></td><td>45873352</td><td>66715972708</td><td class="c-red">Acetaminophen 325 MG /<br>Chlorpheniramine Maleate 2 MG /<br>Phenylephrine Hydrochloride 5 MG Oral<br>Tablet</td><td>11-digit<br>NDC</td><td class="num">timeout</td><td class="num">timeout</td><td class="num">timeout</td><td class="num last">timeout</td><td class="pl5">Drug</td><td class="pl7">NDC</td></tr>
          </tbody>
        </table>
      </section>
    </div>
  </main>
  <div class="scrl"><div class="up"><svg class="ic text-secondary" width="18" height="10"><use href="#a-up"/></svg></div><div class="thm"></div></div>
</div>
<div class="redo"></div><div class="redi"></div>
</div>
<script src="https://cdn.jsdelivr.net/npm/bootstrap@5.3.0/dist/js/bootstrap.bundle.min.js"></script>
</body></html>
